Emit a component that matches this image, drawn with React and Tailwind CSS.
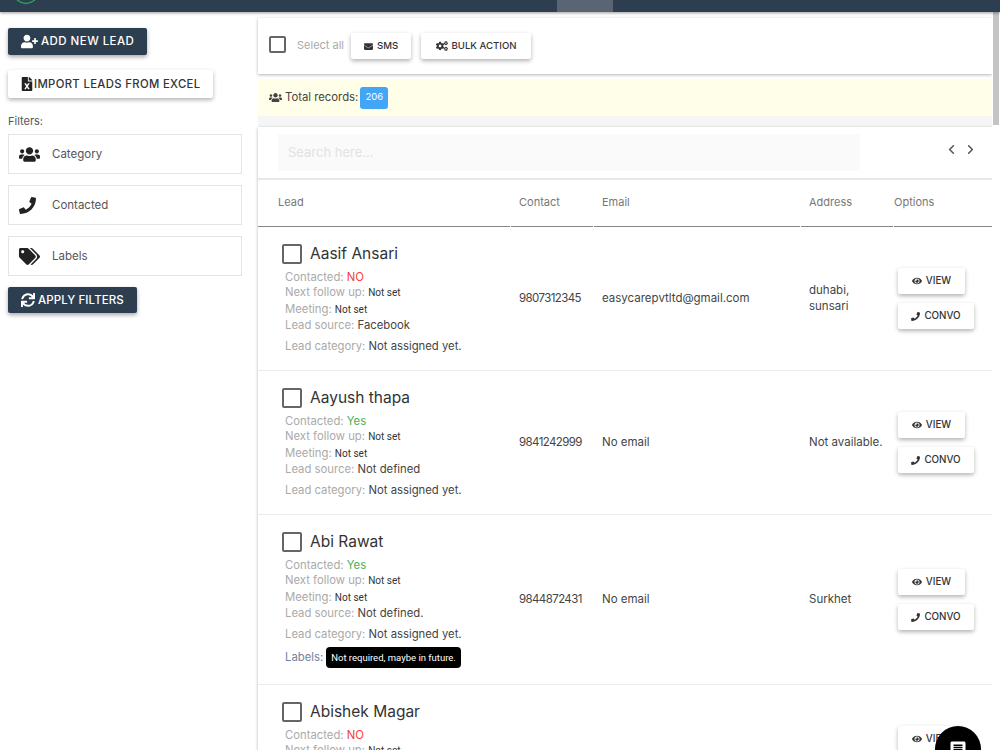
import React from 'react';
import { FaUserPlus, FaFileExcel, FaUsers, FaPhone, FaTags, FaSync, FaEnvelope, FaCogs, FaEye } from 'react-icons/fa';
import { MdMessage } from 'react-icons/md';
import { ChevronLeft, ChevronRight } from 'lucide-react';

const leads = [
  { name: 'Aasif Ansari', contacted: 'NO', source: 'Facebook', phone: '9807312345', email: 'easycarepvtltd@gmail.com', address: 'duhabi, sunsari', h: 'h-[144px]' },
  { name: 'Aayush thapa', contacted: 'Yes', source: 'Not defined', phone: '9841242999', email: 'No email', address: 'Not available.', h: 'h-[144px]' },
  { name: 'Abi Rawat', contacted: 'Yes', source: 'Not defined.', phone: '9844872431', email: 'No email', address: 'Surkhet', label: 'Not required, maybe in future.', h: 'h-[170px]' },
  { name: 'Abishek Magar', contacted: 'NO', source: 'Not defined', phone: '', email: '', address: '', h: 'h-[144px]' },
];

const cols = 'grid grid-cols-[252px_82px_206px_92px_1fr] gap-x-px';

function DarkButton({ icon, children, className }) {
  return (
    <button className={`flex items-center px-[13px] gap-[3px] rounded-[2px] bg-[#2c3e50] text-white text-[11.5px] font-medium shadow-[0_2px_4px_rgba(0,0,0,0.35)] ${className || ''}`}>
      {icon}
      {children}
    </button>
  );
}

function LightButton({ icon, children, className }) {
  return (
    <button className={`flex items-center h-[26px] gap-[4px] rounded-[2px] bg-white text-[#333] font-medium shadow-[0_2px_4px_rgba(0,0,0,0.3)] ${className || ''}`}>
      {icon}
      {children}
    </button>
  );
}

function FilterBox({ icon, label }) {
  return (
    <div className="flex items-center h-[40px] border border-[#e4e4e4] text-[11.5px] text-[#555]">
      <span className="w-[43px] pl-[10px] text-[#222]">{icon}</span>
      <span className="pt-[2px]">{label}</span>
    </div>
  );
}

function LeadRow({ lead }) {
  return (
    <div className={`${cols} ${lead.h} border-b border-[#ececec] text-[11.5px] text-[#444]`}>
      <div className="pl-[24px] pt-[15px]">
        <div className="flex items-center gap-[8px] text-[15.5px] text-[#333]">
          <div className="w-[20px] h-[20px] shrink-0 rounded-[2px] border-2 border-[#666] bg-white" />
          {lead.name}
        </div>
        <div className="pl-[3px] mt-[5px] text-[11.3px] text-[#aaa]">
          <div className="h-[14px] leading-[14px]">
            Contacted: <span className={lead.contacted === 'NO' ? 'text-[#f44336]' : 'text-[#4caf50]'}>{lead.contacted}</span>
          </div>
          <div className="h-[17px] leading-[17px]">
            Next follow up: <span className="text-[10px] text-[#333] font-['Roboto',sans-serif]">Not set</span>
          </div>
          <div className="h-[16px] leading-[16px]">
            Meeting: <span className="text-[10px] text-[#333] font-['Roboto',sans-serif]">Not set</span>
          </div>
          <div className="h-[16px] leading-[16px]">
            Lead source: <span className="text-[#444]">{lead.source}</span>
          </div>
          <div className="h-[16px] leading-[16px] mt-[5px]">
            Lead category: <span className="text-[#444]">Not assigned yet.</span>
          </div>
          {lead.label && (
            <div className="flex items-center mt-[5px] h-[21px]">
              <span className="text-[#7383a0]">Labels:</span>
              <span className="ml-[3px] flex items-center h-[21px] px-[5px] rounded-[4px] bg-black text-white text-[9.5px] font-['Roboto',sans-serif]">{lead.label}</span>
            </div>
          )}
        </div>
      </div>
      <div className="flex items-center pl-[8px] tracking-[-0.6px]">{lead.phone}</div>
      <div className="flex items-center pl-[8px]">{lead.email}</div>
      <div className="flex items-center pl-[8px] pr-[6px] -mt-[1px] leading-[16px]">{lead.address}</div>
      <div className="flex flex-col justify-center items-start gap-[9px] pl-[4px] text-[9.8px]">
        <LightButton className="w-[67px] justify-center" icon={<FaEye size={10} />}>VIEW</LightButton>
        <LightButton className="w-[76px] justify-center" icon={<FaPhone size={9} />}>CONVO</LightButton>
      </div>
    </div>
  );
}

export default function App() {
  return (
    <div className="h-[750px] overflow-hidden bg-white font-['Inter',sans-serif] relative">
      {/* Navbar, scrolled mostly out of view */}
      <div className="h-[12px] overflow-hidden flex bg-[#2c3e50] shadow-[0_1px_3px_rgba(0,0,0,0.4)] relative z-10">
        <svg width="20" height="12" viewBox="0 0 20 12" className="ml-[16px] shrink-0">
          <path d="M1 0 Q 10 7 19 0" fill="none" stroke="#2e9e5b" strokeWidth="1.5" />
        </svg>
        <div className="ml-[521px] w-[56px] bg-[#5a6472]" />
      </div>

      <div className="flex h-[738px]">
        {/* Sidebar */}
        <aside className="w-[258px] shrink-0 pl-[8px] pr-[16px] pt-[16px]">
          <div className="flex">
            <DarkButton className="h-[27px] tracking-[0.45px]" icon={<FaUserPlus size={17} />}>ADD NEW LEAD</DarkButton>
          </div>
          <div className="flex mt-[15px]">
            <button className="flex items-center h-[28px] pl-[12px] pr-[13px] rounded-[2px] bg-white text-[#333] text-[11.3px] font-medium tracking-[0.35px] shadow-[0_2px_4px_rgba(0,0,0,0.3)]">
              <FaFileExcel size={14} className="text-[#222]" />
              <span className="pt-[1px]">IMPORT LEADS FROM EXCEL</span>
            </button>
          </div>
          <div className="mt-[15px] mb-[5px] h-[16px] leading-[16px] text-[11px] text-[#555]">Filters:</div>
          <div className="flex flex-col gap-[11px]">
            <FilterBox icon={<FaUsers size={21} />} label="Category" />
            <FilterBox icon={<FaPhone size={17} />} label="Contacted" />
            <FilterBox icon={<FaTags size={21} />} label="Labels" />
          </div>
          <div className="flex mt-[11px]">
            <DarkButton className="h-[26px] tracking-[0.1px]" icon={<FaSync size={14} />}>
              <span className="pt-[1px]">APPLY FILTERS</span>
            </DarkButton>
          </div>
        </aside>

        {/* Main column */}
        <main className="w-[734px] shrink-0 pt-[6px]">
          <div className="flex items-center h-[56px] pl-[11px] bg-white shadow-[0_1px_3px_rgba(0,0,0,0.3)]">
            <div className="-mt-[4px] w-[17px] h-[17px] shrink-0 rounded-[2px] border-2 border-[#666] bg-white" />
            <span className="ml-[11px] -mt-[2px] text-[11px] text-[#aaa]">Select all</span>
            <LightButton className="ml-[7px] w-[60px] justify-center text-[9.6px]" icon={<FaEnvelope size={9} />}>SMS</LightButton>
            <LightButton className="ml-[10px] w-[110px] justify-center text-[9.6px]" icon={<FaCogs size={12} />}>BULK ACTION</LightButton>
          </div>

          <div className="flex items-center h-[37px] mt-[5px] pl-[11px] bg-[#fffee8] text-[11.3px] text-[#444]">
            <FaUsers size={13} className="mr-[3px]" />
            Total records:
            <span className="ml-[2px] flex items-center justify-center w-[28px] h-[22px] rounded-[3px] bg-[#42a5f5] text-white text-[9.5px]">206</span>
          </div>

          <div className="h-[11px] bg-[#f5f5f5]" />

          <div className="bg-white shadow-[0_1px_3px_rgba(0,0,0,0.3)]">
            <div className="flex items-start h-[53px] pl-[20px] border-b-2 border-[#e8e8e8]">
              <div className="flex items-center w-[582px] h-[37px] mt-[7px] pl-[10px] bg-[#fafafa] text-[13px] text-[#e2e2e2]">Search here...</div>
              <div className="flex gap-[4px] ml-[84px] mt-[15px] text-[#555]">
                <ChevronLeft size={15} strokeWidth={2.5} />
                <ChevronRight size={15} strokeWidth={2.5} />
              </div>
            </div>
            <div className={`${cols} h-[47px] text-[11px] text-[#777]`}>
              <div className="flex items-center pl-[20px] pb-[1px] border-b border-[#888]">Lead</div>
              <div className="flex items-center pl-[8px] pb-[1px] border-b border-[#888]">Contact</div>
              <div className="flex items-center pl-[8px] pb-[1px] border-b border-[#888]">Email</div>
              <div className="flex items-center pl-[8px] pb-[1px] border-b border-[#888]">Address</div>
              <div className="flex items-center pb-[1px] border-b border-[#888]">Options</div>
            </div>
            {leads.map((lead) => (
              <LeadRow key={lead.name} lead={lead} />
            ))}
          </div>
        </main>

        {/* Page scrollbar */}
        <div className="w-[8px] bg-white">
          <div className="h-[113px] ml-[1px] w-[6px] bg-[#c4c4c4]" />
        </div>
      </div>

      {/* Floating chat button */}
      <button className="absolute left-[935px] top-[726px] w-[46px] h-[46px] rounded-full bg-black flex justify-center pt-[14px] text-white">
        <MdMessage size={18} />
      </button>
    </div>
  );
}
